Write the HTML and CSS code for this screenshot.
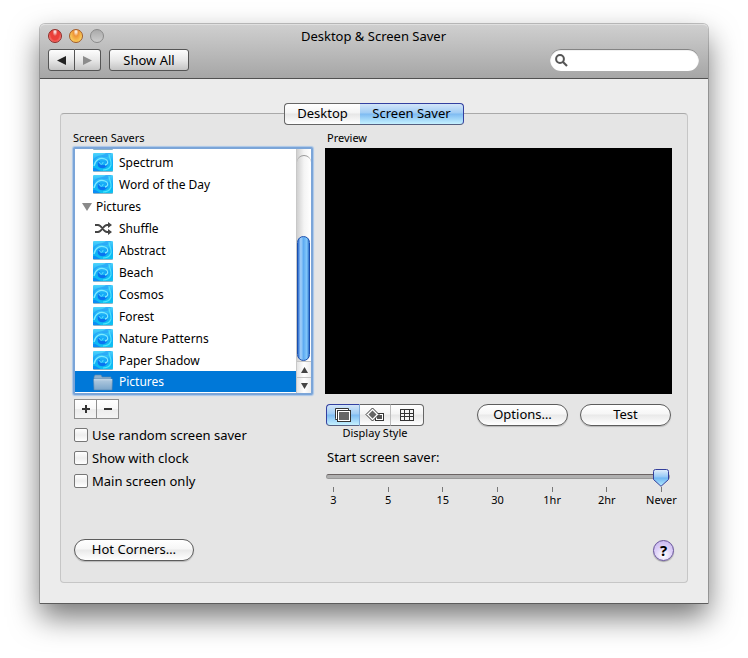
FILE: index.html
```html
<!DOCTYPE html>
<html lang="en">
<head>
    <meta charset="UTF-8">
    <meta name="viewport" content="width=device-width, initial-scale=1.0">
    <title>Desktop &amp; Screen Saver</title>
    <link rel="stylesheet" href="styles.css">
</head>
<body>

<!-- Shared icons -->
<svg class="sprite" aria-hidden="true">
    <defs>
        <linearGradient id="waveFill" x1="0" y1="0" x2="0" y2="1">
            <stop offset="0" stop-color="#4fd4fb"/>
            <stop offset="0.5" stop-color="#14aaf8"/>
            <stop offset="1" stop-color="#0cc4f2"/>
        </linearGradient>
        <linearGradient id="folderFill" x1="0" y1="0" x2="0" y2="1">
            <stop offset="0" stop-color="#b4cce0"/>
            <stop offset="1" stop-color="#7ba5ca"/>
        </linearGradient>
    </defs>
    <symbol id="wave" viewBox="0 0 20 19">
        <rect x="0" y="1" width="20" height="18" rx="1" fill="#8cb4c8"/>
        <rect x="0" y="0" width="20" height="18" rx="1" fill="url(#waveFill)"/>
        <path d="M0 9C2 5 6 3 10 4C14 5 17 3 18 0H13C11 2 8 2 5 3C3 4 1 5 0 7Z" fill="#1a90f5" opacity="0.5"/>
        <path d="M5 9C4 13 6 16 11 15C15 14 16 10 13 7C14 10 13 12 10 12C8 12 6 11 7 8Z" fill="#0a74f0"/>
        <path d="M1 13C2 7 7 4 12 6C15 7 16 11 12 12" fill="none" stroke="#7eeaff" stroke-width="1.3"/>
        <path d="M6 9C7 12 10 12 10 9" fill="none" stroke="#5fdcff" stroke-width="1"/>
        <path d="M16 1C16 5 19 8 18 12C17 15 14 17 10 17" fill="none" stroke="#4fe4fc" stroke-width="1.2"/>
        <path d="M0 15C3 14 4 17 8 18H0Z" fill="#0b8df5"/>
    </symbol>
</svg>

<main class="window">
    <header class="titlebar">
        <div class="title-row">
            <div class="lights">
                <button class="light red" type="button" aria-label="Close"></button>
                <button class="light yellow" type="button" aria-label="Minimize"></button>
                <button class="light off" type="button" aria-label="Zoom" disabled></button>
            </div>
            <h1>Desktop &amp; Screen Saver</h1>
        </div>
        <div class="toolbar">
            <div class="nav">
                <button type="button" aria-label="Back"><svg width="9" height="9" viewBox="0 0 9 9"><path d="M0 4.5L9 0V9Z" fill="#222"/></svg></button>
                <button type="button" aria-label="Forward" disabled><svg width="9" height="9" viewBox="0 0 9 9"><path d="M9 4.5L0 0V9Z" fill="#8c8c8c"/></svg></button>
            </div>
            <button class="show-all" type="button">Show All</button>
            <label class="search">
                <svg width="13" height="13" viewBox="0 0 13 13" aria-hidden="true"><circle cx="5" cy="5" r="3.9" fill="none" stroke="#555" stroke-width="2"/><path d="M8 8L12 12" stroke="#555" stroke-width="2.2"/></svg>
                <input type="search" aria-label="Search">
            </label>
        </div>
    </header>

    <div class="content">
        <div class="tabs" role="tablist">
            <button type="button" role="tab" aria-selected="false">Desktop</button>
            <button class="selected" type="button" role="tab" aria-selected="true">Screen Saver</button>
        </div>

        <div class="columns">
            <section class="savers">
                <h2>Screen Savers</h2>
                <div class="list-frame">
                    <ul class="list" role="listbox" aria-label="Screen Savers">
                        <li><svg class="icon"><use href="#wave"/></svg></li>
                        <li><svg class="icon"><use href="#wave"/></svg>Spectrum</li>
                        <li><svg class="icon"><use href="#wave"/></svg>Word of the Day</li>
                        <li class="group"><svg width="10" height="8" viewBox="0 0 10 8"><path d="M0 0H10L5 8Z" fill="#8a8a8a"/></svg>Pictures</li>
                        <li><svg class="icon" viewBox="0 0 20 19"><path d="M2 6H5C9 6 10 13 14 13H16M2 13H5C9 13 10 6 14 6H16" fill="none" stroke="#444" stroke-width="1.8"/><path d="M15 3L19 6L15 9ZM15 10L19 13L15 16Z" fill="#444"/></svg>Shuffle</li>
                        <li><svg class="icon"><use href="#wave"/></svg>Abstract</li>
                        <li><svg class="icon"><use href="#wave"/></svg>Beach</li>
                        <li><svg class="icon"><use href="#wave"/></svg>Cosmos</li>
                        <li><svg class="icon"><use href="#wave"/></svg>Forest</li>
                        <li><svg class="icon"><use href="#wave"/></svg>Nature Patterns</li>
                        <li><svg class="icon"><use href="#wave"/></svg>Paper Shadow</li>
                        <li class="selected" role="option" aria-selected="true"><svg class="icon" viewBox="0 0 20 19"><path d="M1 4L2 2H8L9 4H18V8H1Z" fill="#8fb0cb" stroke="#5d87ad" stroke-width="0.6"/><path d="M0.5 6H19.5L19 17H1Z" fill="url(#folderFill)" stroke="#5685b0" stroke-width="0.6"/><path d="M1 6.7H19" stroke="#d3e3f0" stroke-width="0.8"/></svg>Pictures</li>
                    </ul>
                    <div class="scrollbar">
                        <div class="track"><div class="thumb"></div></div>
                        <button type="button" aria-label="Scroll up"><svg width="7" height="6" viewBox="0 0 7 6"><path d="M3.5 0L7 6H0Z" fill="#444"/></svg></button>
                        <button type="button" aria-label="Scroll down"><svg width="7" height="6" viewBox="0 0 7 6"><path d="M3.5 6L0 0H7Z" fill="#444"/></svg></button>
                    </div>
                </div>

                <div class="edit-buttons">
                    <button type="button" aria-label="Add"><svg width="8" height="8" viewBox="0 0 8 8"><path d="M4 0V8M0 4H8" stroke="#333" stroke-width="2"/></svg></button>
                    <button type="button" aria-label="Remove"><svg width="8" height="8" viewBox="0 0 8 8"><path d="M0 4H8" stroke="#333" stroke-width="2"/></svg></button>
                </div>

                <div class="checks">
                    <label><input type="checkbox">Use random screen saver</label>
                    <label><input type="checkbox">Show with clock</label>
                    <label><input type="checkbox">Main screen only</label>
                </div>
            </section>

            <section class="preview-pane">
                <h2>Preview</h2>
                <div class="preview"></div>

                <div class="controls">
                    <div class="style-group">
                        <div class="segments">
                            <button class="selected" type="button" aria-label="Slideshow"><svg width="18" height="16" viewBox="0 0 18 16"><path d="M1.5 11.5V1.5H14.5V12.5H1.5Z" fill="#fff" stroke="#333"/><rect x="3.5" y="3.5" width="13" height="11" fill="#fff" stroke="#333"/><rect x="5" y="5" width="10" height="8" fill="#666"/></svg></button>
                            <button type="button" aria-label="Collage"><svg width="20" height="16" viewBox="0 0 20 16"><rect x="10.5" y="6.5" width="8" height="7" fill="#fff" stroke="#333"/><rect x="12" y="8" width="5" height="4" fill="#555"/><path d="M7.5 1L14 7.5L7.5 14L1 7.5Z" fill="#fff" stroke="#333"/><path d="M7.5 3.5L11.5 7.5L7.5 11.5L3.5 7.5Z" fill="#666"/></svg></button>
                            <button type="button" aria-label="Mosaic"><svg width="16" height="14" viewBox="0 0 16 14"><rect x="1" y="1" width="14" height="12" fill="#333"/><path d="M2 2h3v3H2zM6 2h4v3H6zM11 2h3v3h-3zM2 6h3v2H2zM6 6h4v2H6zM11 6h3v2h-3zM2 9h3v3H2zM6 9h4v3H6zM11 9h3v3h-3z" fill="#f4f4f4"/></svg></button>
                        </div>
                        <span class="caption">Display Style</span>
                    </div>
                    <div class="actions">
                        <button class="pill" type="button">Options…</button>
                        <button class="pill" type="button">Test</button>
                    </div>
                </div>

                <div class="timer">
                    <label for="start">Start screen saver:</label>
                    <input id="start" type="range" min="0" max="6" step="1" value="6">
                    <div class="ticks">
                        <span>3</span>
                        <span>5</span>
                        <span>15</span>
                        <span>30</span>
                        <span>1hr</span>
                        <span>2hr</span>
                        <span>Never</span>
                    </div>
                </div>
            </section>
        </div>

        <footer class="footer">
            <button class="pill hot-corners" type="button">Hot Corners…</button>
            <button class="help" type="button" aria-label="Help">?</button>
        </footer>
    </div>
</main>

</body>
</html>
```

FILE: styles.css
```css
* {
    box-sizing: border-box;
}
body {
    margin: 0;
    padding: 24px 40px 54px;
    background-color: #fff;
    color: #000;
    font-family: "Noto Sans", "Open Sans", sans-serif;
    font-size: 13px;
    line-height: 18px;
}
button, input {
    margin: 0;
    padding: 0;
    font: inherit;
    color: inherit;
}
button {
    display: flex;
    align-items: center;
    justify-content: center;
}
h1, h2 {
    margin: 0;
    font-weight: normal;
}
h2, .ticks {
    font-size: 11px;
    line-height: 16px;
}
.sprite {
    position: absolute;
    width: 0;
    height: 0;
}
.window {
    border-radius: 5px 5px 0 0;
    background-color: #ececec;
    box-shadow: 0 0 0 1px rgba(0, 0, 0, 0.22), 0 1px 0 #777, 0 14px 30px rgba(0, 0, 0, 0.55);
}

/* Title bar and toolbar */
.titlebar {
    height: 55px;
    padding: 3px 9px 0 8px;
    border-top: 1px solid #e0e0e0;
    border-bottom: 1px solid #515151;
    border-radius: 5px 5px 0 0;
    background: linear-gradient(#cfcfcf, #a6a6a6);
}
.title-row {
    display: grid;
    grid-template-columns: 1fr auto 1fr;
    height: 18px;
}
h1 {
    font-size: 13px;
    line-height: 16px;
}
.lights {
    display: flex;
    gap: 7px;
    padding-top: 1px;
}
.light {
    width: 14px;
    height: 14px;
    border: 1px solid #8a8a8a;
    border-radius: 50%;
}
.red {
    border-color: #8f2a26;
    background: radial-gradient(ellipse at 50% 15%, #fff 0, #e8403a 30%, #ee3e39 55%, #ffb3ac 100%);
}
.yellow {
    border-color: #a35a25;
    background: radial-gradient(ellipse at 50% 15%, #fff 0, #ee9438 30%, #f7bb4c 60%, #ffef8e 100%);
}
.off {
    background: linear-gradient(#aaa, #cdcdcd);
}
.toolbar {
    display: flex;
    align-items: center;
    margin-top: 3px;
}
.nav {
    display: flex;
    margin-right: 8px;
}
.nav button, .show-all {
    height: 22px;
    border: 1px solid #555;
    border-radius: 3px;
    background: linear-gradient(#fdfdfd, #e8e8e8 50%, #c4c4c4);
}
.nav button {
    width: 27px;
}
.nav button:first-child {
    border-radius: 3px 0 0 3px;
}
.nav button:last-child {
    width: 26px;
    border-left: none;
    border-radius: 0 3px 3px 0;
}
.show-all {
    width: 80px;
}
.search {
    display: flex;
    align-items: center;
    width: 149px;
    height: 22px;
    margin-left: auto;
    padding: 0 6px 0 5px;
    border-radius: 11px;
    background-color: #fff;
    box-shadow: inset 0 1px 1px #777;
}
.search input {
    flex: 1;
    min-width: 0;
    border: none;
    outline: none;
    background: none;
}

/* Grouped pane */
.content {
    display: flex;
    flex-direction: column;
    margin: 34px 20px 0;
    border: 1px solid #c6c6c6;
    border-top-color: #a9a9a9;
    border-radius: 4px;
    background-color: #e5e5e5;
    padding: 0 15px 21px 12px;
}
.window::after {
    content: "";
    display: block;
    height: 20px;
}
.tabs {
    display: flex;
    align-self: center;
    height: 22px;
    margin: -11px 0 2px 3px;
}
.tabs button, .segments button {
    border: 1px solid #666;
    background: linear-gradient(#fff, #f4f4f4 45%, #e6e6e6 50%, #fff);
}
.tabs button {
    width: 104px;
    padding-bottom: 2px;
    border-left: none;
    border-radius: 0 4px 4px 0;
}
.tabs button:first-child {
    width: 76px;
    border-left: 1px solid #666;
    border-right: none;
    border-radius: 4px 0 0 4px;
}
.tabs .selected, .segments .selected {
    border-color: #3340a0;
    border-bottom-color: #555f80;
    background: linear-gradient(#d3e5f8, #9fccf5 45%, #7ebbf2 50%, #c5f1ff);
}

.columns {
    display: grid;
    grid-template-columns: 240px 1fr;
    gap: 12px;
    padding-top: 3px;
}
.savers h2, .preview-pane h2 {
    height: 17px;
}
.preview-pane h2 {
    padding-left: 2px;
    margin-bottom: 1px;
}

/* List of savers */
.list-frame {
    display: flex;
    height: 248px;
    border: 2px solid #7ba5d8;
    border-radius: 2px;
    background-color: #fff;
    box-shadow: 0 0 1px 1px #a9c6e8;
}
.list {
    display: flex;
    flex: 1;
    flex-direction: column;
    justify-content: flex-end;
    min-width: 0;
    margin: 0;
    padding: 0;
    overflow: hidden;
    list-style: none;
    font-size: 12px;
    line-height: 20px;
}
.list li {
    display: flex;
    flex: none;
    align-items: center;
    gap: 6px;
    height: 22px;
    padding: 1px 0 0 18px;
}
.list .group {
    gap: 4px;
    padding-left: 7px;
}
.list .selected {
    border-bottom: 1px solid #fff;
    background-color: #0078d8;
    color: #fff;
}
.icon {
    width: 20px;
    height: 19px;
}
.scrollbar {
    display: flex;
    flex-direction: column;
    width: 15px;
    border-left: 1px solid #c8c8c8;
    background: linear-gradient(90deg, #d0d0d0, #f4f4f4 50%, #fff);
}
.track {
    display: flex;
    flex: 1;
    align-items: flex-end;
    margin-top: 6px;
    border-top: 1px solid #999;
    border-radius: 7px 7px 0 0;
}
.thumb {
    width: 13px;
    height: 125px;
    border: 1px solid #1a4fae;
    border-radius: 7px;
    background: linear-gradient(90deg, #2a6cd0, #a5d2fa 25%, #5eabf2 50%, #83c8fb 80%, #2e73cc);
}
.scrollbar button {
    height: 16px;
    border: none;
    border-top: 1px solid #c4c4c4;
    background: linear-gradient(90deg, #e4e4e4, #fff 50%, #ededed);
}

.edit-buttons {
    display: flex;
    margin: 4px 0 0 1px;
}
.edit-buttons button {
    width: 23px;
    height: 20px;
    border: 1px solid #8f8f8f;
    background: linear-gradient(#fff, #f8f8f8 50%, #ececec 50%, #f4f4f4);
}
.edit-buttons button:last-child {
    border-left: none;
    width: 22px;
}
.checks {
    display: flex;
    flex-direction: column;
    align-items: flex-start;
    gap: 5px;
    margin: 7px 0 0 1px;
}
.checks label {
    display: flex;
    align-items: center;
    gap: 4px;
}
.checks input {
    appearance: none;
    width: 14px;
    height: 14px;
    border: 1px solid #777;
    border-radius: 2px;
    background: linear-gradient(#fff, #eee 50%, #fff);
}
.checks input:checked {
    background: #7ebbf2;
}

/* Preview and its controls */
.preview {
    height: 246px;
    background-color: #000;
}
.controls {
    display: flex;
    justify-content: space-between;
    align-items: flex-start;
    padding: 10px 1px 0;
}
.style-group {
    display: flex;
    flex-direction: column;
    align-items: center;
}
.caption {
    font-size: 11px;
    line-height: 14px;
}
.segments {
    display: flex;
}
.segments button {
    width: 31px;
    height: 22px;
    border-left: none;
    border-right: 1px solid #bbb;
}
.segments button:first-child {
    width: 34px;
    border-left: 1px solid #3340a0;
    border-right-color: #7fa9d8;
    border-radius: 4px 0 0 4px;
}
.segments button:last-child {
    width: 33px;
    border-right-color: #666;
    border-radius: 0 4px 4px 0;
}
.actions {
    display: flex;
    gap: 12px;
}
.pill {
    width: 91px;
    height: 22px;
    padding-bottom: 2px;
    border: 1px solid #5c5c5c;
    border-radius: 11px;
    background: linear-gradient(#fff, #f6f6f6 45%, #e9e9e9 50%, #fff);
    box-shadow: 0 1px 1px rgba(0, 0, 0, 0.2);
}
.timer {
    display: flex;
    flex-direction: column;
    margin: 8px 2px 0 1px;
}
.timer label {
    padding-left: 1px;
}
.timer input {
    appearance: none;
    width: 100%;
    height: 18px;
    margin-top: 1px;
    background: none;
}
.timer input::-webkit-slider-runnable-track {
    height: 5px;
    border: 1px solid #999;
    border-top-color: #6b6464;
    border-radius: 3px;
    background-color: #b0b0b0;
}
.timer input::-webkit-slider-thumb {
    appearance: none;
    width: 16px;
    height: 18px;
    margin-top: -6px;
    background: url("data:image/svg+xml,%3Csvg xmlns='http://www.w3.org/2000/svg' viewBox='0 0 16 18'%3E%3ClinearGradient id='g' x1='0' y1='0' x2='0' y2='1'%3E%3Cstop offset='0' stop-color='%23e4effb'/%3E%3Cstop offset='.45' stop-color='%2393c8f6'/%3E%3Cstop offset='.5' stop-color='%2370b6f2'/%3E%3Cstop offset='1' stop-color='%23b4ecff'/%3E%3C/linearGradient%3E%3Cpath d='M2.5.5H13.500Q15.500.5 15.500 2.500V10.500L8 17.300L.5 10.500V2.500Q.5.5 2.500.5Z' fill='url(%23g)' stroke='%23333f9b'/%3E%3C/svg%3E") no-repeat;
}
.ticks {
    display: flex;
    justify-content: space-between;
    margin-top: 2px;
    padding: 0 8px 0 7px;
}
.ticks span {
    display: flex;
    flex-direction: column;
    align-items: center;
    width: 1px;
    white-space: nowrap;
}
.ticks span::before {
    content: "";
    width: 1px;
    height: 5px;
    background-color: #777;
}

.footer {
    display: flex;
    align-items: center;
    justify-content: space-between;
    margin: 31px -2px 0 1px;
}
.hot-corners {
    width: 120px;
}
.help {
    width: 21px;
    height: 21px;
    border: 1px solid #65519a;
    border-radius: 50%;
    background: radial-gradient(circle at 50% 75%, #fff, #ddd0f8 50%, #c2aeea);
    box-shadow: 0 1px 1px rgba(0, 0, 0, 0.3);
    font-size: 15px;
    font-weight: bold;
}
```
